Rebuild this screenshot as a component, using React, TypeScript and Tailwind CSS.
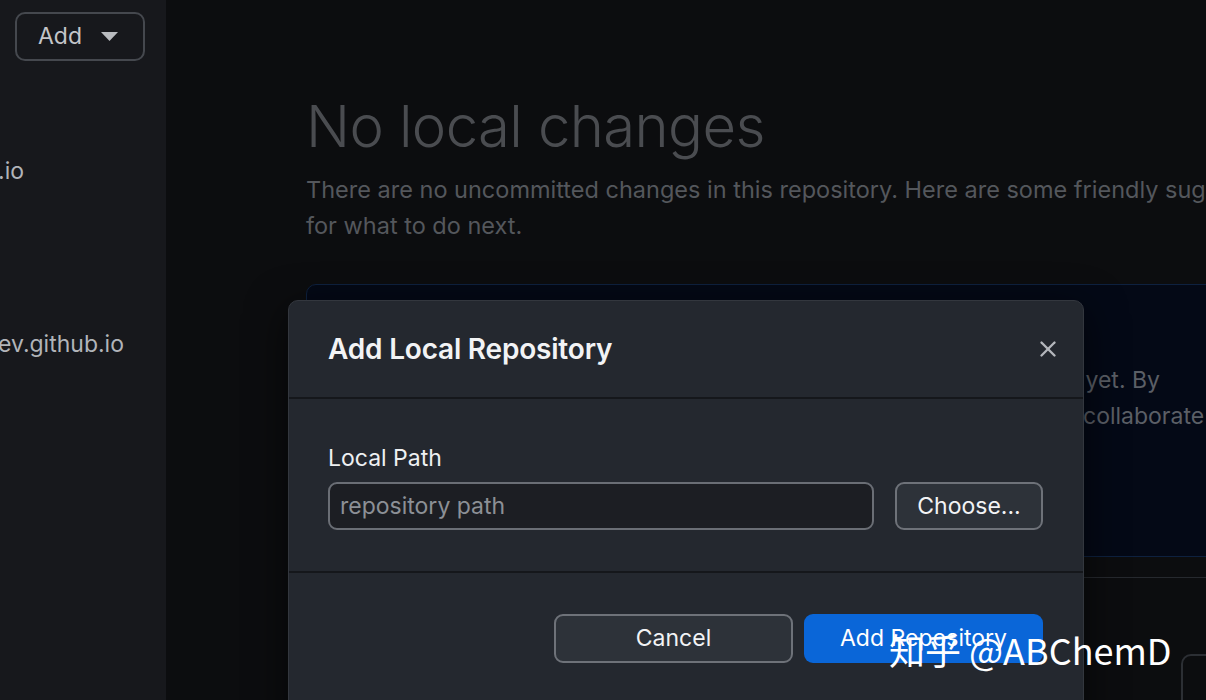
import { X } from 'lucide-react';

export default function App() {
  return (
    <div className="relative flex h-[700px] w-[1206px] overflow-hidden bg-[#0c0d0f] font-['Inter',_'Noto_Sans_CJK_SC',_sans-serif]">
      {/* sidebar */}
      <aside className="flex w-[166px] shrink-0 flex-col overflow-hidden bg-[#17181c]">
        <div className="pl-[15px] pt-[12px]">
          <button className="flex h-[49px] w-[130px] items-center gap-[19px] rounded-[10px] border-2 border-[#45484e] pl-[21px] text-[23px] text-[#c3c5c9]">
            <span>Add</span>
            <svg width="17" height="9" viewBox="0 0 17 9"><path d="M0 0 L17 0 L8.5 9 Z" fill="#b9bbbf" /></svg>
          </button>
        </div>
        <div className="mt-[94px] -ml-[2px] whitespace-nowrap text-[23px] leading-[32px] text-[#b1b4b9]">.io</div>
        <div className="mt-[141px] -ml-[2px] whitespace-nowrap text-[23px] leading-[32px] text-[#b1b4b9]">ev.github.io</div>
      </aside>

      {/* main */}
      <main className="flex min-w-0 flex-1 flex-col pl-[140px] pt-[88px]">
        <h1 className="whitespace-nowrap text-[58px] font-light leading-[76px] tracking-[-0.6px] text-[#4a4c50]">No local changes</h1>
        <p className="mt-[8px] w-[1000px] text-[23.5px] leading-[36px] text-[#54575c]">
          There are no uncommitted changes in this repository. Here are some friendly suggestions
          <br />
          for what to do next.
        </p>
        <div className="mt-[40px] h-[273px] w-[1000px] shrink-0 rounded-tl-[10px] border border-[#0e213f] bg-[#040916] pt-[77px] text-[23px] leading-[36px] text-[#5b5f66]">
          <div className="flex whitespace-nowrap">
            <span className="w-[772px] shrink-0 overflow-hidden text-right">This repository is not published on GitHub</span>
            <span>&nbsp;yet. By</span>
          </div>
          <div className="flex whitespace-nowrap">
            <span className="w-[776px] shrink-0 overflow-hidden text-right">publishing it, others will be able to see it and</span>
            <span>collaborate with you.</span>
          </div>
        </div>
        <div className="mt-[20px] h-[200px] w-[1000px] shrink-0 border-t border-[#26292e] pl-[875px] pt-[76px]">
          <div className="h-[60px] w-[80px] rounded-[10px] border-2 border-[#2c2f34]" />
        </div>
      </main>

      {/* dialog */}
      <div className="absolute left-[288px] top-[300px] flex h-[430px] w-[796px] flex-col rounded-[10px] border border-[#33373e] bg-[#24282f] shadow-[0_10px_40px_rgba(0,0,0,0.6)]">
        <header className="flex h-[98px] shrink-0 items-center justify-between border-b-2 border-[#15171b] pl-[39px] pr-[22px]">
          <h2 className="text-[28px] font-semibold tracking-[-0.2px] text-[#f2f3f5]">Add Local Repository</h2>
          <X size={26} strokeWidth={2.2} className="text-[#b4b7bc]" />
        </header>
        <section className="flex shrink-0 flex-col border-b-2 border-[#15171b] px-[39px] pb-[41px] pt-[44px]">
          <label className="text-[23px] leading-[30px] text-[#eef0f2]">Local Path</label>
          <div className="mt-[9px] flex gap-[21px]">
            <input
              placeholder="repository path"
              className="h-[48px] w-[546px] rounded-[9px] border-2 border-[#6a6e75] bg-[#1c1e23] px-[10px] text-[23px] text-[#e6e8ea] outline-none placeholder:text-[#8c9096]"
            />
            <button className="h-[48px] w-[148px] rounded-[9px] border-2 border-[#6e7279] bg-[#2d3239] text-[23px] text-[#f2f3f5]">Choose...</button>
          </div>
        </section>
        <footer className="flex justify-end gap-[11px] pr-[40px] pt-[41px]">
          <button className="h-[49px] w-[239px] rounded-[9px] border-2 border-[#6e7279] bg-[#2d3239] text-[23px] text-[#f2f3f5]">Cancel</button>
          <button className="h-[49px] w-[239px] rounded-[9px] bg-[#0a66d8] text-[23px] text-white">Add Repository</button>
        </footer>
      </div>

      {/* watermark */}
      <div className="absolute left-[889px] top-[625px] whitespace-nowrap text-[36px] leading-[48px] text-white [font-family:'Noto_Sans_CJK_SC','DejaVu_Sans',sans-serif]">
        知乎 @ABChemD
      </div>
    </div>
  );
}
